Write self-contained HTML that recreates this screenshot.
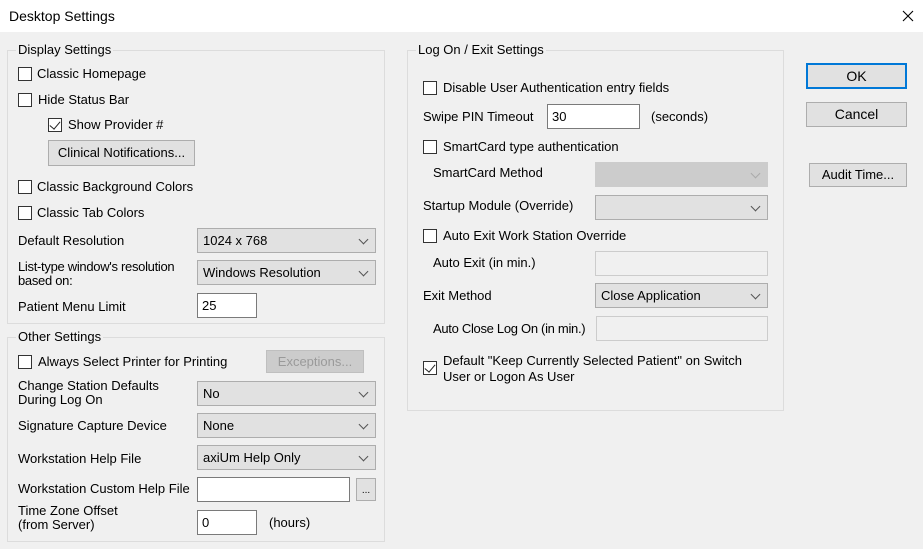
<!DOCTYPE html>
<html><head><style>
*{box-sizing:border-box;margin:0;padding:0}
body{width:923px;height:549px;background:#f0f0f0;font-family:"Liberation Sans",sans-serif;font-size:13px;color:#000;position:relative;overflow:hidden}
.a{position:absolute;white-space:nowrap}
.t{position:absolute;white-space:nowrap;line-height:15px;margin-top:-1px}
.title{position:absolute;left:0;top:0;width:923px;height:32px;background:#fff}
.fr{position:absolute;border:1px solid #dcdcdc}
.lg{position:absolute;background:#f0f0f0;padding:0 2px;line-height:14px}
.cb{position:absolute;width:14px;height:14px;border:1px solid #333;background:#fff}
.sel{position:absolute;height:25px;background:#e1e1e1;border:1px solid #adadad;padding-left:5px;line-height:23px}
.sel:after{content:"";position:absolute;right:8px;top:7px;width:6px;height:6px;border-right:1px solid #555;border-bottom:1px solid #555;transform:rotate(45deg)}
.sel.dis{background:#cccccc;border-color:#cccccc}
.sel.dis:after{border-color:#aaa}
.inp{position:absolute;height:25px;background:#fff;border:1px solid #7a7a7a;padding-left:4px;line-height:23px}
.inp.dis{background:#f0f0f0;border-color:#ccc}
.btn{position:absolute;background:#e1e1e1;border:1px solid #adadad;text-align:center;line-height:22px}
.chk:after{content:"";position:absolute;left:3px;top:0px;width:5px;height:9px;border-right:1.5px solid #222;border-bottom:1.5px solid #222;transform:rotate(40deg)}
</style></head><body>
<div class="title"></div>
<div class="a" style="left:9px;top:8px;font-size:14px">Desktop Settings</div>
<svg class="a" style="left:902px;top:10px" width="12" height="12"><path d="M1 1L11 11M11 1L1 11" stroke="#000" stroke-width="1.1"/></svg>

<div class="fr" style="left:7px;top:50px;width:378px;height:274px"></div>
<div class="lg" style="left:16px;top:43px">Display Settings</div>
<div class="cb" style="left:18px;top:67px"></div><div class="t" style="left:37px;top:67px">Classic Homepage</div>
<div class="cb" style="left:18px;top:93px"></div><div class="t" style="left:38px;top:93px">Hide Status Bar</div>
<div class="cb chk" style="left:48px;top:118px"></div><div class="t" style="left:68px;top:118px">Show Provider #</div>
<div class="btn" style="left:48px;top:140px;width:147px;height:26px;line-height:24px">Clinical Notifications...</div>
<div class="cb" style="left:18px;top:180px"></div><div class="t" style="left:37px;top:180px">Classic Background Colors</div>
<div class="cb" style="left:18px;top:206px"></div><div class="t" style="left:37px;top:206px">Classic Tab Colors</div>
<div class="t" style="left:18px;top:234px">Default Resolution</div>
<div class="sel" style="left:197px;top:228px;width:179px">1024 x 768</div>
<div class="t" style="left:18px;top:261px;line-height:14px;letter-spacing:-0.3px">List-type window's resolution<br>based on:</div>
<div class="sel" style="left:197px;top:260px;width:179px">Windows Resolution</div>
<div class="t" style="left:18px;top:300px">Patient Menu Limit</div>
<div class="inp" style="left:197px;top:293px;width:60px">25</div>

<div class="fr" style="left:7px;top:337px;width:378px;height:205px"></div>
<div class="lg" style="left:16px;top:330px">Other Settings</div>
<div class="cb" style="left:18px;top:355px"></div><div class="t" style="left:38px;top:355px">Always Select Printer for Printing</div>
<div class="btn" style="left:266px;top:350px;width:98px;height:23px;background:#ccc;border-color:#bfbfbf;color:#9a9a9a;line-height:21px">Exceptions...</div>
<div class="t" style="left:18px;top:380px;line-height:14px">Change Station Defaults<br>During Log On</div>
<div class="sel" style="left:197px;top:381px;width:179px">No</div>
<div class="t" style="left:18px;top:419px">Signature Capture Device</div>
<div class="sel" style="left:197px;top:413px;width:179px">None</div>
<div class="t" style="left:18px;top:452px">Workstation Help File</div>
<div class="sel" style="left:197px;top:445px;width:179px">axiUm Help Only</div>
<div class="t" style="left:18px;top:482px">Workstation Custom Help File</div>
<div class="inp" style="left:197px;top:477px;width:153px"></div>
<div class="btn" style="left:356px;top:478px;width:20px;height:23px;line-height:24px;font-size:10px">...</div>
<div class="t" style="left:18px;top:505px;line-height:14px">Time Zone Offset<br>(from Server)</div>
<div class="inp" style="left:197px;top:510px;width:60px">0</div>
<div class="t" style="left:269px;top:516px">(hours)</div>

<div class="fr" style="left:407px;top:50px;width:377px;height:361px"></div>
<div class="lg" style="left:416px;top:43px">Log On / Exit Settings</div>
<div class="cb" style="left:423px;top:81px"></div><div class="t" style="left:443px;top:81px">Disable User Authentication entry fields</div>
<div class="t" style="left:423px;top:110px">Swipe PIN Timeout</div>
<div class="inp" style="left:547px;top:104px;width:93px">30</div>
<div class="t" style="left:651px;top:110px">(seconds)</div>
<div class="cb" style="left:423px;top:140px"></div><div class="t" style="left:443px;top:140px">SmartCard type authentication</div>
<div class="t" style="left:433px;top:166px">SmartCard Method</div>
<div class="sel dis" style="left:595px;top:162px;width:173px"></div>
<div class="t" style="left:423px;top:199px">Startup Module (Override)</div>
<div class="sel" style="left:595px;top:195px;width:173px"></div>
<div class="cb" style="left:423px;top:229px"></div><div class="t" style="left:443px;top:229px">Auto Exit Work Station Override</div>
<div class="t" style="left:433px;top:256px">Auto Exit (in min.)</div>
<div class="inp dis" style="left:595px;top:251px;width:173px"></div>
<div class="t" style="left:423px;top:289px">Exit Method</div>
<div class="sel" style="left:595px;top:283px;width:173px">Close Application</div>
<div class="t" style="left:433px;top:322px;letter-spacing:-0.3px">Auto Close Log On (in min.)</div>
<div class="inp dis" style="left:596px;top:316px;width:172px"></div>
<div class="cb chk" style="left:423px;top:361px"></div>
<div class="t" style="left:443px;top:354px;line-height:16px">Default "Keep Currently Selected Patient" on Switch<br>User or Logon As User</div>

<div class="btn" style="left:806px;top:63px;width:101px;height:26px;border:2px solid #0078d7;line-height:22px;font-size:14px">OK</div>
<div class="btn" style="left:806px;top:102px;width:101px;height:25px;font-size:14px">Cancel</div>
<div class="btn" style="left:809px;top:163px;width:98px;height:24px">Audit Time...</div>
</body></html>
